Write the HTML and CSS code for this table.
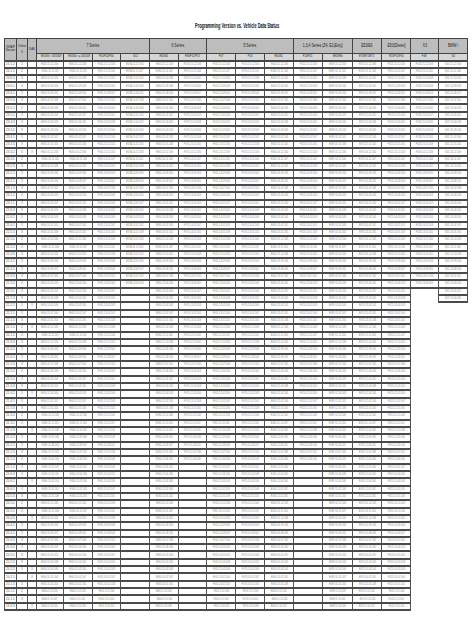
FILE: index.html
```html
<!DOCTYPE html>
<html>
<head>
<meta charset="utf-8">
<title>Programming Version vs. Vehicle Data Status</title>
<link rel="stylesheet" href="styles.css">
</head>
<body>
<div class="title"><span class="title-text">Programming Version vs. Vehicle Data Status</span></div>
<table class="grid">
  <colgroup>
    <col class="w12"><col class="w11"><col class="w9">
    <col class="w27"><col class="w29"><col class="w28"><col class="w29">
    <col class="w29"><col class="w28">
    <col class="w29"><col class="w29"><col class="w29">
    <col class="w29"><col class="w30">
    <col class="w29"><col class="w29"><col class="w28"><col class="w29">
  </colgroup>
  <thead>
    <tr class="h1">
      <th rowspan="2" class="tiny">ISTA/P<br>Version</th>
      <th rowspan="2" class="tiny">Online<br><br>X</th>
      <th rowspan="2" class="tiny">DAS</th>
      <th colspan="4"><span class="nar">7 Series</span></th>
      <th colspan="2"><span class="nar">6 Series</span></th>
      <th colspan="3"><span class="nar">5 Series</span></th>
      <th colspan="2"><span class="nar">1,3,4 Series (Z4, E1(Evs))</span></th>
      <th><span class="nar">E53/E6</span></th>
      <th><span class="nar">E53(Diesel)</span></th>
      <th><span class="nar">X3</span></th>
      <th><span class="nar">BMW i</span></th>
    </tr>
    <tr class="h2">
      <th><span class="nar">E65/66 &lt; 03/2009</span></th>
      <th><span class="nar">E65/66 &gt;= 03/2009</span></th>
      <th><span class="nar">F01/F02/F04</span></th>
      <th><span class="nar">G12</span></th>
      <th><span class="nar">E63/64</span></th>
      <th><span class="nar">F06/F12/F13</span></th>
      <th><span class="nar">F07</span></th>
      <th><span class="nar">F10</span></th>
      <th><span class="nar">E60/61</span></th>
      <th><span class="nar">F20/F21</span></th>
      <th><span class="nar">E81/E8x</span></th>
      <th><span class="nar">E70/E71/E72</span></th>
      <th><span class="nar">F25/F15/F16</span></th>
      <th><span class="nar">F48</span></th>
      <th><span class="nar">I01</span></th>
    </tr>
  </thead>
  <tbody id="rows"></tbody>
</table>
<script src="script.js"></script>
</body>
</html>
```

FILE: styles.css
```css
html, body {
  margin: 0;
  padding: 0;
  background: #ffffff;
}
body {
  width: 474px;
  font-family: "Liberation Sans", Arial, sans-serif;
}
.title {
  height: 38px;
  box-sizing: border-box;
  display: flex;
  justify-content: center;
  align-items: flex-end;
  padding-bottom: 9px;
}
.title-text {
  display: inline-block;
  font-size: 6.5px;
  font-weight: bold;
  color: #111;
  transform: scaleX(0.6);
  white-space: nowrap;
}
.grid {
  margin-left: 4px;
  border-collapse: collapse;
  table-layout: fixed;
  width: 464px;
}
.w9 { width: 9px; } .w11 { width: 11px; } .w12 { width: 12px; }
.w27 { width: 27px; } .w28 { width: 28px; } .w29 { width: 29px; } .w30 { width: 30px; }
.nar {
  display: inline-block;
  transform: scaleX(0.72);
  white-space: nowrap;
}
.grid th {
  padding: 0;
  border: 1px solid #444;
  color: #1a1a1a;
  font-weight: normal;
  white-space: nowrap;
  overflow: hidden;
  line-height: 1;
}
.h1 { height: 15px; }
.h1 th {
  background: #bdbdbd;
  font-size: 4.8px;
}
.h1 th.tiny { font-size: 2.8px; }
.h2 { height: 7px; }
.h2 th {
  background: #d6d6d6;
  font-size: 3.6px;
  border-bottom: 2px solid #444;
}
.grid td {
  padding: 0;
  height: 5.33px;
  border-top: 2px solid #4a4a4a;
  border-bottom: 2px solid #4a4a4a;
  border-left: 1px solid #555;
  border-right: 1px solid #555;
  font-size: 3.2px;
  line-height: 1;
  color: #8a8a8a;
  text-align: center;
  white-space: nowrap;
  overflow: hidden;
}
.grid td .nar { transform: scaleX(0.75); }
.grid td.lbl { text-align: left; padding-left: 1px; color: #666; }
.grid td.none {
  border: none;
  background: #fff;
}
```

FILE: script.js
```js
(function () {
  var cols = [
    {p: 'E060', end: 75}, {p: 'E060', end: 75}, {p: 'F001', end: 75}, {p: 'E07A', end: 31},
    {p: 'E060', end: 75}, {p: 'F070', end: 55},
    {p: 'F001', end: 75}, {p: 'F070', end: 75}, {p: 'E060', end: 75},
    {p: 'F020', end: 55}, {p: 'E089', end: 75},
    {p: 'E070', end: 75}, {p: 'F025', end: 75}, {p: 'F026', end: 31, hide: true}, {p: 'I001', end: 33, hide: true}
  ];
  var dasRows = {12: 1, 33: 1, 36: 1, 45: 1, 50: 1, 57: 1, 62: 1, 69: 1};
  var dasOnly = {50: 1, 57: 1, 62: 1, 70: 1, 74: 1};
  var tbody = document.getElementById('rows');
  var year = 24, month = 1, patch = 2;
  var html = '';
  for (var i = 0; i < 75; i++) {
    var ver = year + '.' + month + '.' + patch;
    patch--;
    if (patch < 1) {
      patch = (i % 3) + 2;
      month--;
      if (month < 1) { month = 6; year--; }
    }
    var online = dasOnly[i] ? '' : 'X';
    var das = (dasRows[i] || dasOnly[i]) ? 'X' : '';
    var yy = 15 - Math.floor(i / 12);
    var mm = 12 - (i % 12);
    var mmS = (mm < 10 ? '0' : '') + mm;
    html += '<tr><td class="lbl">' + ver + '</td><td>' + online + '</td><td>' + das + '</td>';
    for (var c = 0; c < cols.length; c++) {
      var col = cols[c];
      if (i >= col.end) {
        html += col.hide ? '<td class="none"></td>' : '<td></td>';
      } else {
        var nn = 500 + ((i * 7 + c * 3) % 9);
        html += '<td><span class="nar">' + col.p + '-' + yy + '-' + mmS + '-' + nn + '</span></td>';
      }
    }
    html += '</tr>';
  }
  tbody.innerHTML = html;
})();
```
